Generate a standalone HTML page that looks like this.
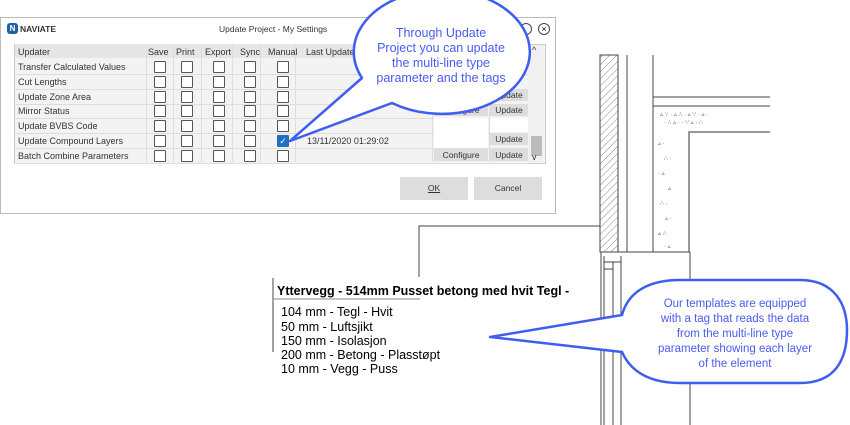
<!DOCTYPE html>
<html><head><meta charset="utf-8"><style>
body{margin:0;width:850px;height:425px;overflow:hidden;background:#fff;font-family:"Liberation Sans",sans-serif;position:relative}
.a{position:absolute}
.dlg{left:0;top:17px;width:556px;height:197px;border:1px solid #bbb;background:#fff;box-sizing:border-box}
.t{font-size:9px;color:#333;white-space:nowrap}
.cb{position:absolute;width:10px;height:10px;border:1px solid #555;background:#fff;border-radius:1px}
.btn{position:absolute;background:#ddd;font-size:8.5px;color:#333;text-align:center}
.lay{font-size:12.5px;color:#000;left:281px}
</style></head><body>
<div class="a dlg"></div>
<div class="a" style="left:7px;top:23px;width:11px;height:11px;border-radius:3px;background:#1f5fa8;color:#fff;font-size:8px;font-weight:bold;text-align:center;line-height:11px">N</div>
<div class="a t" style="left:20px;top:24px;font-weight:bold;font-size:8.5px">NAVIATE</div>
<div class="a t" style="left:219px;top:24px;font-size:8.5px">Update Project - My Settings</div>
<div class="a" style="left:520px;top:23px;width:10px;height:10px;border:1px solid #444;border-radius:50%"></div>
<div class="a" style="left:538px;top:23px;width:10px;height:10px;border:1px solid #444;border-radius:50%;font-size:9px;line-height:10px;text-align:center">×</div>
<div class="a" style="left:14px;top:44px;width:530px;height:118px;border:1px solid #ccc;background:#f3f3f3"></div>
<div class="a" style="left:15px;top:44px;width:513px;height:14px;background:#e6e6e6"></div>
<div class="a" style="left:528px;top:45px;width:15px;height:117px;background:#f0f0f0"></div>
<div class="a" style="left:531px;top:136px;width:11px;height:20px;background:#bbb"></div>
<div class="a t" style="left:532px;top:45px">^</div><div class="a t" style="left:532px;top:152px">v</div>
<div id="g"></div>
<div class="a t" style="left:18px;top:47px">Updater</div>
<div class="a t" style="left:148px;top:47px">Save</div>
<div class="a t" style="left:176px;top:47px">Print</div>
<div class="a t" style="left:205px;top:47px">Export</div>
<div class="a t" style="left:240px;top:47px">Sync</div>
<div class="a t" style="left:268px;top:47px">Manual</div>
<div class="a t" style="left:306px;top:47px">Last Update</div>
<div class="a t" style="left:18px;top:62px">Transfer Calculated Values</div>
<div class="a t" style="left:18px;top:77px">Cut Lengths</div>
<div class="a t" style="left:18px;top:92px">Update Zone Area</div>
<div class="a t" style="left:18px;top:106px">Mirror Status</div>
<div class="a t" style="left:18px;top:121px">Update BVBS Code</div>
<div class="a t" style="left:18px;top:136px">Update Compound Layers</div>
<div class="a t" style="left:18px;top:151px">Batch Combine Parameters</div>
<div class="a t" style="left:307px;top:136px">13/11/2020 01:29:02</div>
<div class="a" style="left:434px;top:118px;width:54px;height:30px;background:#fff"></div>
<div class="a" style="left:490px;top:118px;width:38px;height:14px;background:#fff"></div>
<div class="btn" style="left:434px;top:104px;width:54px;height:12px;line-height:12px">Configure</div>
<div class="btn" style="left:490px;top:104px;width:38px;height:12px;line-height:12px">Update</div>
<div class="btn" style="left:490px;top:89px;width:38px;height:12px;line-height:12px">Update</div>
<div class="btn" style="left:490px;top:133px;width:38px;height:12px;line-height:12px">Update</div>
<div class="btn" style="left:434px;top:149px;width:54px;height:12px;line-height:12px">Configure</div>
<div class="btn" style="left:490px;top:149px;width:38px;height:12px;line-height:12px">Update</div>
<div class="btn" style="left:400px;top:177px;width:68px;height:23px;line-height:23px;text-decoration:underline">OK</div>
<div class="btn" style="left:474px;top:177px;width:68px;height:23px;line-height:23px">Cancel</div>
<script>
var rows=[61,76,91,105,120,135,150],cols=[154,181,213,244,277],h='';
rows.forEach(function(y,i){h+='<div class="a" style="left:15px;top:'+(y+13)+'px;width:513px;height:1px;background:#ddd"></div>';
cols.forEach(function(x,j){if(i==5&&j==4)h+='<div class="cb" style="left:'+x+'px;top:'+y+'px;background:#1f6fc0;border-color:#1f6fc0;color:#fff;font-size:9px;line-height:10px;text-align:center">✓</div>';else h+='<div class="cb" style="left:'+x+'px;top:'+y+'px"></div>';});});
[146,173,201,232,260,295,432,489].forEach(function(x){h+='<div class="a" style="left:'+x+'px;top:44px;width:1px;height:118px;background:#ddd"></div>';});
document.getElementById('g').innerHTML=h;
</script>
<svg class="a" style="left:0;top:0" width="850" height="425">
<defs><pattern id="hp" width="5" height="5" patternUnits="userSpaceOnUse" patternTransform="rotate(45)"><line x1="0" y1="0" x2="0" y2="5" stroke="#555" stroke-width="0.7"/></pattern></defs>
<g stroke="#444" stroke-width="1" fill="none">
<rect x="600" y="55" width="18" height="197" fill="url(#hp)"/>
<line x1="627" y1="55" x2="627" y2="252"/>
<line x1="653" y1="55" x2="653" y2="252"/>
<line x1="653" y1="97" x2="770" y2="97"/>
<line x1="653" y1="106" x2="770" y2="106"/>
<polyline points="770,132 689,132 689,252" stroke="#999" stroke-width="2"/>
<line x1="600" y1="252" x2="690" y2="252"/>
<line x1="690" y1="252" x2="690" y2="425"/>
<line x1="601" y1="252" x2="601" y2="425"/><line x1="604" y1="256" x2="604" y2="425"/>
<line x1="613" y1="262" x2="613" y2="425"/><line x1="621" y1="256" x2="621" y2="425"/>
<line x1="604" y1="262" x2="621" y2="262"/><line x1="604" y1="269" x2="613" y2="269"/>
<polyline points="600,226 419,226 419,277"/>
<line x1="273" y1="278" x2="273" y2="352"/>
<line x1="273" y1="299" x2="420" y2="299" stroke="#888"/>
</g>
<g fill="#555" font-size="6">
<text x="660" y="116">▵ ∵ ·  ▵ ∴ ·  ▵ ∵ · ▵ ·</text><text x="664" y="124">· ∴ ▵ · · ∵ ▵ · ∴</text>
<text x="658" y="145">▵ ·</text><text x="664" y="160">∴ ·</text><text x="658" y="175">· ▵</text><text x="668" y="190">▵</text>
<text x="660" y="205">∴ ·</text><text x="665" y="220">▵ ·</text><text x="658" y="235">▵ ∴</text><text x="664" y="248">· ▵</text>
</g>
<path d="M362,78 L290,141 L392,103 A88,62 0 1 0 362,78 Z" fill="#fff" stroke="#3d5ef0" stroke-width="2.5" stroke-linejoin="round"/>
<g fill="#4a5cf0" font-size="12.5" text-anchor="middle">
<text x="441" y="37">Through Update</text><text x="441" y="52">Project you can update</text><text x="441" y="67">the multi-line type</text><text x="441" y="82">parameter and the tags</text></g>
<path d="M622,315 C630,285 660,280 680,280 L800,280 C835,280 847,305 847,330 C847,360 835,383 800,383 L680,383 C655,383 632,375 622,352 L490,337 Z" fill="#fff" stroke="#3d5ef0" stroke-width="2.5" stroke-linejoin="round"/>
<g fill="#4a5cf0" font-size="11.5" text-anchor="middle">
<text x="735" y="307">Our templates are equipped</text><text x="735" y="322">with a tag that reads the data</text><text x="735" y="337">from the multi-line type</text><text x="735" y="352">parameter showing each layer</text><text x="735" y="367">of the element</text></g>
</svg>
<div class="a" style="left:277px;top:284px;font-size:12.5px;font-weight:bold">Yttervegg - 514mm Pusset betong med hvit Tegl -</div>
<div class="a lay" style="top:305px">104 mm - Tegl - Hvit</div>
<div class="a lay" style="top:320px">50 mm - Luftsjikt</div>
<div class="a lay" style="top:334px">150 mm - Isolasjon</div>
<div class="a lay" style="top:348px">200 mm - Betong - Plasstøpt</div>
<div class="a lay" style="top:362px">10 mm - Vegg - Puss</div>
</body></html>
